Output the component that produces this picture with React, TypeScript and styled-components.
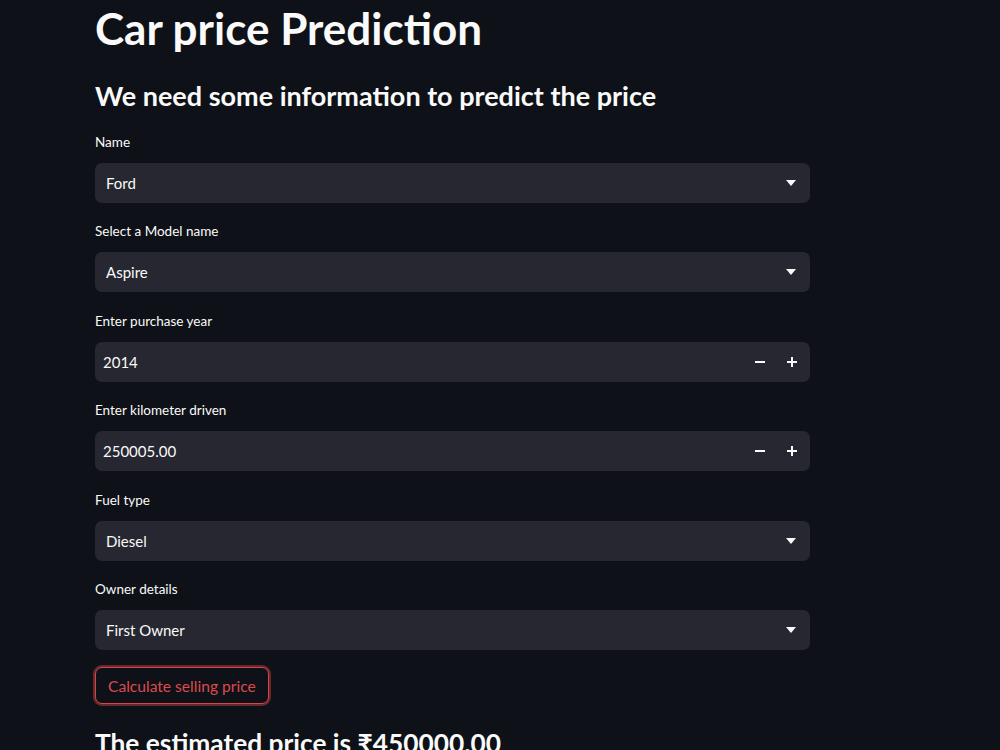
import styled, { createGlobalStyle } from 'styled-components'

const GlobalStyle = createGlobalStyle`
    body {
        margin: 0;
        background-color: #0e1117;
        color: #fafafa;
        font-family: "Source Sans Pro", Lato, "Noto Sans", sans-serif;
    }
`

const Page = styled.div`
    min-height: 750px;
    padding: 0 0 0 95px;
    overflow: hidden;
`

const Main = styled.div`
    width: 715px;
    display: flex;
    flex-direction: column;
`

const Title = styled.h1`
    margin: 0;
    font-size: 44px;
    font-weight: 700;
    line-height: 56px;
    color: #fafafa;
`

const SubTitle = styled.h2`
    margin: 22px 0 16px;
    font-size: 27px;
    font-weight: 700;
    line-height: 36px;
    color: #fafafa;
`

const Field = styled.div`
    display: flex;
    flex-direction: column;
    margin-bottom: 16.4px;
`

const Label = styled.label`
    height: 24px;
    margin-bottom: 9px;
    font-size: 13.5px;
    line-height: 24px;
    color: #fafafa;
`

const Control = styled.div<{ $number?: boolean }>`
    height: 40px;
    display: flex;
    align-items: center;
    background-color: #262730;
    border-radius: 7px;
    padding: ${p => (p.$number ? '0 2px 0 8px' : '0 14px 0 11px')};
    box-sizing: border-box;
    font-size: 15px;
    color: #fafafa;
`

const Value = styled.span`
    flex: 1;
`

const StepButton = styled.div`
    width: 32px;
    height: 36px;
    display: flex;
    align-items: center;
    justify-content: center;
`

const Button = styled.button`
    align-self: flex-start;
    margin-top: 1px;
    padding: 0 12px;
    height: 37px;
    background-color: #0e1117;
    border: 1px solid #d34649;
    box-shadow: 0 0 0 2px rgba(180, 58, 62, 0.55);
    border-radius: 7px;
    font-family: inherit;
    font-size: 15.6px;
    color: #dc4a4e;
`

const Result = styled.h3`
    margin: 21px 0 0;
    font-size: 26.3px;
    font-weight: 700;
    line-height: 36px;
    color: #fafafa;
`

function Caret() {
    return (
        <svg width="10" height="6" viewBox="0 0 10 6">
            <path d="M0 0 L10 0 L5 6 Z" fill="#fafafa" />
        </svg>
    )
}

function Minus() {
    return (
        <svg width="10" height="10" viewBox="0 0 10 10">
            <rect x="0" y="4" width="10" height="2" fill="#fafafa" />
        </svg>
    )
}

function Plus() {
    return (
        <svg width="10" height="10" viewBox="0 0 10 10">
            <rect x="0" y="4" width="10" height="2" fill="#fafafa" />
            <rect x="4" y="0" width="2" height="10" fill="#fafafa" />
        </svg>
    )
}

function SelectField({ label, value }: { label: string; value: string }) {
    return (
        <Field>
            <Label>{label}</Label>
            <Control>
                <Value>{value}</Value>
                <Caret />
            </Control>
        </Field>
    )
}

function NumberField({ label, value }: { label: string; value: string }) {
    return (
        <Field>
            <Label>{label}</Label>
            <Control $number>
                <Value>{value}</Value>
                <StepButton><Minus /></StepButton>
                <StepButton><Plus /></StepButton>
            </Control>
        </Field>
    )
}

export default function App() {
    return (
        <Page>
            <GlobalStyle />
            <Main>
                <Title>Car price Prediction</Title>
                <SubTitle>We need some information to predict the price</SubTitle>
                <SelectField label="Name" value="Ford" />
                <SelectField label="Select a Model name" value="Aspire" />
                <NumberField label="Enter purchase year" value="2014" />
                <NumberField label="Enter kilometer driven" value="250005.00" />
                <SelectField label="Fuel type" value="Diesel" />
                <SelectField label="Owner details" value="First Owner" />
                <Button>Calculate selling price</Button>
                <Result>The estimated price is ₹450000.00</Result>
            </Main>
        </Page>
    )
}
